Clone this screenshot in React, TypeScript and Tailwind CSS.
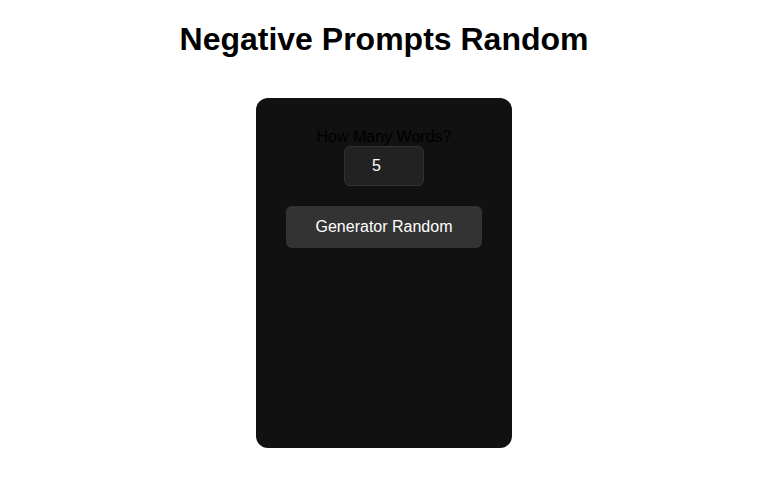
import { useState } from 'react';

export default function App() {
  const [count, setCount] = useState('5');

  return (
    <div className="min-h-screen bg-white flex flex-col items-center font-['Liberation_Sans',Arial,sans-serif]">
      <h1 className="mt-[21px] text-[32px] leading-[37px] font-bold text-black">Negative Prompts Random</h1>
      <div className="mt-[40px] w-[256px] h-[350px] rounded-[12px] bg-[#111111] flex flex-col items-center pt-[30px]">
        <label className="text-[16px] leading-[18px] text-black">How Many Words?</label>
        <input
          value={count}
          onChange={(e) => setCount(e.target.value)}
          className="w-[80px] h-[40px] rounded-[6px] bg-[#222222] border border-[#333333] pl-[27px] text-left text-white text-[16px] outline-none"
        />
        <button className="mt-[20px] w-[196px] h-[42px] rounded-[6px] bg-[#333333] text-white text-[16px]">
          Generator Random
        </button>
      </div>
    </div>
  );
}
